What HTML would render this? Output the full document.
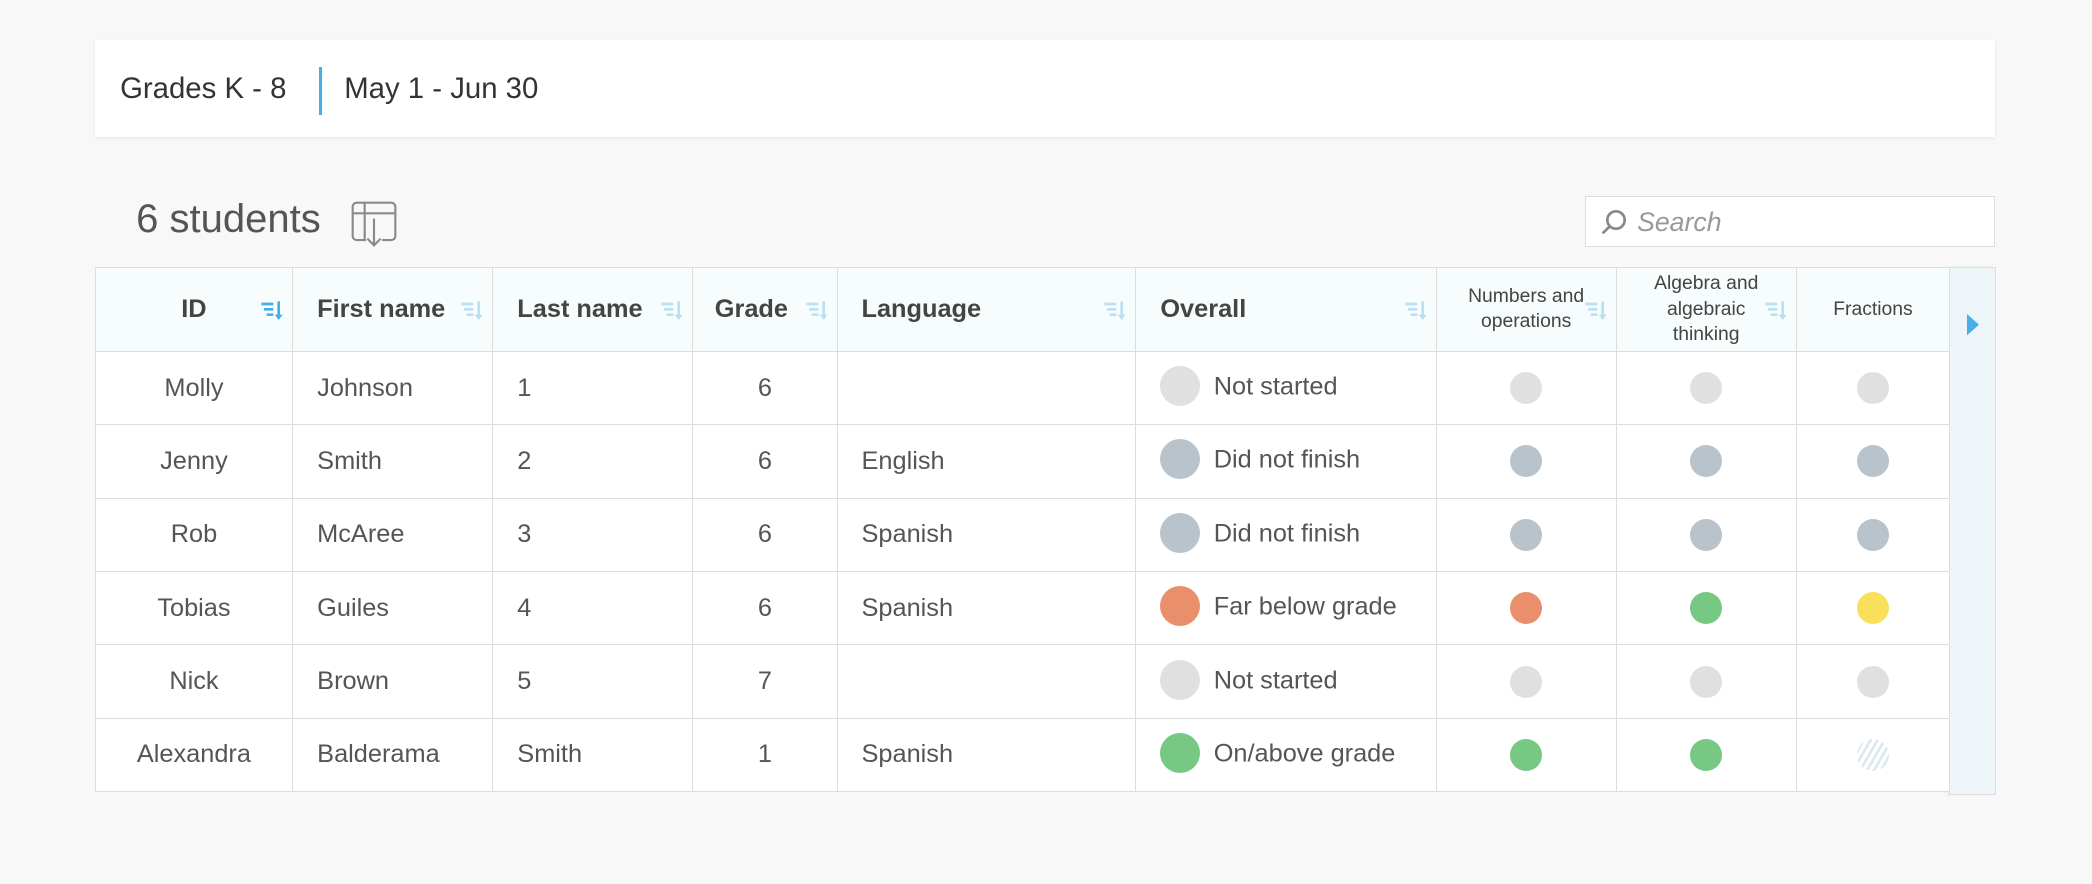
<!DOCTYPE html>
<html><head><meta charset="utf-8">
<style>
html,body{margin:0;padding:0;width:2092px;height:884px;overflow:hidden;background:#f8f8f8;font-family:"Liberation Sans",sans-serif;}
#w{zoom:1.3342;position:relative;width:1568px;height:663px;}
.a{position:absolute;}
.card{left:71px;top:30px;width:1424px;height:73px;background:#fff;box-shadow:0 1px 3px rgba(0,0,0,.08);}
.t{font-size:22px;color:#333;top:54px;}
table{position:absolute;left:71px;top:200px;border-collapse:collapse;table-layout:fixed;width:1390px;background:#fff;}
td,th{border:1px solid #ddd;font-size:19px;color:#555;height:55px;padding:0 0 0 18px;white-space:nowrap;overflow:hidden;position:relative;text-align:left;font-weight:normal;background:#fff;box-sizing:border-box;}
th{background:#f7fcfd;height:63px;color:#444;font-weight:bold;}
th.s{font-weight:normal;font-size:14.5px;color:#444;text-align:center;padding:0;line-height:19px;white-space:normal}
.c{text-align:center;padding:0;}
.so{position:absolute;right:6px;top:24px;}
.d{display:inline-block;width:24px;height:24px;border-radius:50%;vertical-align:middle;overflow:hidden;}
.D{display:inline-block;width:30px;height:30px;border-radius:50%;vertical-align:middle;margin-right:10px;margin-top:-3px}
.g{background:#e0e0e0}.sl{background:#b8c3cc}.o{background:#ea8f6b}.gr{background:#76c883}.y{background:#f9e05a}
.h{background:repeating-linear-gradient(-60deg,#dbe9ef 0 2px,#fff 2px 4.5px);border-radius:50%}
</style></head><body><div id="w">
<div class="a card"></div>
<div class="a t" style="left:90px">Grades K - 8</div>
<div class="a" style="left:239px;top:50px;width:2px;height:36px;background:#4aaee6"></div>
<div class="a t" style="left:258px">May 1 - Jun 30</div>
<div class="a" style="left:102px;top:148px;font-size:30px;color:#555">6 students</div>
<svg class="a" style="left:262px;top:150px" width="36" height="36" viewBox="0 0 36 36" fill="none" stroke="#8a8a8a" stroke-width="1.6"><path d="M12 30H5a3 3 0 0 1-3-3V5a3 3 0 0 1 3-3h26a3 3 0 0 1 3 3v22a3 3 0 0 1-3 3h-7M2 10h32M11 2v28M18 14v20M13 29l5 5 5-5"/></svg>
<div class="a" style="left:1188px;top:147px;width:306px;height:37px;border:1px solid #ddd;background:#fff"></div>
<svg class="a" style="left:1199px;top:156px" width="22" height="22" viewBox="0 0 22 22" fill="none" stroke="#888" stroke-width="2"><circle cx="12" cy="9" r="6.5"/><path d="M7.5 13.5L2 19"/></svg>
<div class="a" style="left:1227px;top:155px;font-size:20px;color:#999;font-style:italic">Search</div>
<div class="a" style="left:1461px;top:200px;width:35px;height:396px;background:#eef5f9;border:1px solid #ddd;box-sizing:border-box;box-shadow:-2px 0 3px rgba(0,0,0,.05)"></div>
<svg class="a" style="left:1474px;top:235px" width="10" height="16"><path d="M0 0L9 8L0 16Z" fill="#4aaee6"/></svg>
<table>
<colgroup><col style="width:148px"><col style="width:150px"><col style="width:150px"><col style="width:108px"><col style="width:224px"><col style="width:225px"><col style="width:135px"><col style="width:135px"><col style="width:115px"></colgroup>
<tr>
<th class="c">ID<svg class="so" width="18" height="16"><g stroke="#4aaee6" stroke-width="2"><path d="M1 3h9M3 7h7M5 11h5M14 1v13"/></g><path d="M11 11l3 4 3-4z" fill="#4aaee6"/></svg></th>
<th>First name<svg class="so" width="18" height="16"><g stroke="#b9e0f3" stroke-width="2"><path d="M1 3h9M3 7h7M5 11h5M14 1v13"/></g><path d="M11 11l3 4 3-4z" fill="#b9e0f3"/></svg></th>
<th>Last name<svg class="so" width="18" height="16"><g stroke="#b9e0f3" stroke-width="2"><path d="M1 3h9M3 7h7M5 11h5M14 1v13"/></g><path d="M11 11l3 4 3-4z" fill="#b9e0f3"/></svg></th>
<th style="padding-left:16px">Grade<svg class="so" width="18" height="16"><g stroke="#b9e0f3" stroke-width="2"><path d="M1 3h9M3 7h7M5 11h5M14 1v13"/></g><path d="M11 11l3 4 3-4z" fill="#b9e0f3"/></svg></th>
<th>Language<svg class="so" width="18" height="16"><g stroke="#b9e0f3" stroke-width="2"><path d="M1 3h9M3 7h7M5 11h5M14 1v13"/></g><path d="M11 11l3 4 3-4z" fill="#b9e0f3"/></svg></th>
<th>Overall<svg class="so" width="18" height="16"><g stroke="#b9e0f3" stroke-width="2"><path d="M1 3h9M3 7h7M5 11h5M14 1v13"/></g><path d="M11 11l3 4 3-4z" fill="#b9e0f3"/></svg></th>
<th class="s">Numbers and<br>operations<svg class="so" width="18" height="16"><g stroke="#b9e0f3" stroke-width="2"><path d="M1 3h9M3 7h7M5 11h5M14 1v13"/></g><path d="M11 11l3 4 3-4z" fill="#b9e0f3"/></svg></th>
<th class="s">Algebra and<br>algebraic<br>thinking<svg class="so" width="18" height="16"><g stroke="#b9e0f3" stroke-width="2"><path d="M1 3h9M3 7h7M5 11h5M14 1v13"/></g><path d="M11 11l3 4 3-4z" fill="#b9e0f3"/></svg></th>
<th class="s">Fractions</th>
</tr>
<tr><td class="c">Molly</td><td>Johnson</td><td>1</td><td class="c">6</td><td></td><td><span class="D g"></span>Not started</td><td class="c"><span class="d g"></span></td><td class="c"><span class="d g"></span></td><td class="c"><span class="d g"></span></td></tr>
<tr><td class="c">Jenny</td><td>Smith</td><td>2</td><td class="c">6</td><td>English</td><td><span class="D sl"></span>Did not finish</td><td class="c"><span class="d sl"></span></td><td class="c"><span class="d sl"></span></td><td class="c"><span class="d sl"></span></td></tr>
<tr><td class="c">Rob</td><td>McAree</td><td>3</td><td class="c">6</td><td>Spanish</td><td><span class="D sl"></span>Did not finish</td><td class="c"><span class="d sl"></span></td><td class="c"><span class="d sl"></span></td><td class="c"><span class="d sl"></span></td></tr>
<tr><td class="c">Tobias</td><td>Guiles</td><td>4</td><td class="c">6</td><td>Spanish</td><td><span class="D o"></span>Far below grade</td><td class="c"><span class="d o"></span></td><td class="c"><span class="d gr"></span></td><td class="c"><span class="d y"></span></td></tr>
<tr><td class="c">Nick</td><td>Brown</td><td>5</td><td class="c">7</td><td></td><td><span class="D g"></span>Not started</td><td class="c"><span class="d g"></span></td><td class="c"><span class="d g"></span></td><td class="c"><span class="d g"></span></td></tr>
<tr><td class="c">Alexandra</td><td>Balderama</td><td>Smith</td><td class="c">1</td><td>Spanish</td><td><span class="D gr"></span>On/above grade</td><td class="c"><span class="d gr"></span></td><td class="c"><span class="d gr"></span></td><td class="c"><span class="d h"></span></td></tr>
</table>
</div></body></html>
